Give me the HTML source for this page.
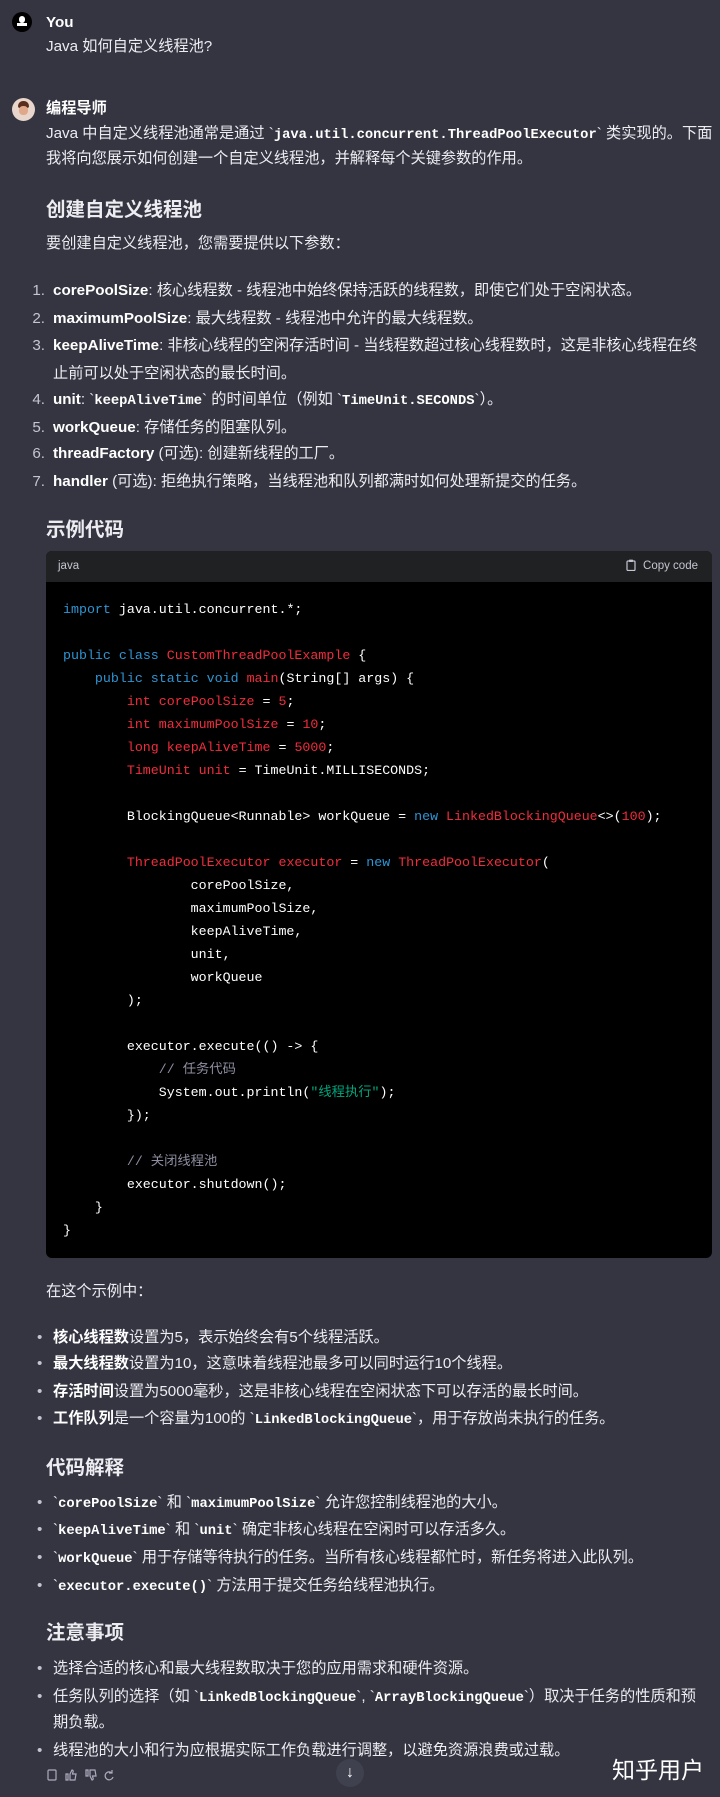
<!DOCTYPE html>
<html><head><meta charset="utf-8"><style>
body{margin:0;width:720px;height:1797px;background:#343541;color:#ececf1;font-family:"Liberation Sans","Noto Sans CJK SC",sans-serif;font-size:15.2px;position:relative;overflow:hidden}
.l{position:absolute;left:46px;line-height:27.5px;white-space:nowrap}
.i{left:53px}
.h{font-size:19.5px;font-weight:bold;line-height:30px}
b{font-weight:bold;color:#fff}
code{font-family:"Liberation Mono","Noto Sans CJK SC",monospace;font-weight:bold;font-size:13.8px;color:#fff}
.n{position:absolute;left:28px;width:17px;text-align:right;color:#c5c5d2;line-height:27.5px}
.d{position:absolute;left:37px;color:#c5c5d2;line-height:27.5px}
.cb{position:absolute;left:46px;top:551px;width:666px;height:707px;background:#000;border-radius:6px;overflow:hidden}
.ch{height:31px;background:#202123;color:#c5c5d2;font-size:11.5px;line-height:31px;padding:0 12px;position:relative}
pre{margin:0;position:absolute;left:17px;top:47px;font-family:"Liberation Mono","Noto Sans CJK SC",monospace;font-size:13.3px;line-height:23px;color:#fff}
.k{color:#2e95d3}.r{color:#f22c3d}.g{color:#00a67d}.c{color:#8e8ea0}
</style></head><body>
<div style="position:absolute;left:12px;top:12px;width:20px;height:20px;border-radius:50%;background:#000"><div style="position:absolute;left:7px;top:4px;width:6px;height:7px;border-radius:3px;background:#fff"></div><div style="position:absolute;left:5px;top:11px;width:10px;height:3px;background:#fff"></div></div>
<div class="l" style="top:9px"><b>You</b></div>
<div class="l" style="top:33px">Java 如何自定义线程池?</div>
<div style="position:absolute;left:12px;top:98px;width:23px;height:23px;border-radius:50%;background:#e8d6cc"><div style="position:absolute;left:6px;top:3px;width:11px;height:7px;border-radius:5px 5px 2px 2px;background:#5a2e1c"></div><div style="position:absolute;left:7px;top:8px;width:9px;height:9px;border-radius:4px;background:#e0a88a"></div></div>
<div class="l" style="top:95px"><b>编程导师</b></div>
<div class="l" style="top:120px">Java 中自定义线程池通常是通过 `<code>java.util.concurrent.ThreadPoolExecutor</code>` 类实现的。下面</div>
<div class="l" style="top:145px">我将向您展示如何创建一个自定义线程池，并解释每个关键参数的作用。</div>
<div class="l h" style="top:195px">创建自定义线程池</div>
<div class="l" style="top:230px">要创建自定义线程池，您需要提供以下参数：</div>

<div class="n" style="top:277px">1.</div><div class="l i" style="top:277px"><b>corePoolSize</b>: 核心线程数 - 线程池中始终保持活跃的线程数，即使它们处于空闲状态。</div>
<div class="n" style="top:305px">2.</div><div class="l i" style="top:305px"><b>maximumPoolSize</b>: 最大线程数 - 线程池中允许的最大线程数。</div>
<div class="n" style="top:332px">3.</div><div class="l i" style="top:332px"><b>keepAliveTime</b>: 非核心线程的空闲存活时间 - 当线程数超过核心线程数时，这是非核心线程在终</div>
<div class="l i" style="top:360px">止前可以处于空闲状态的最长时间。</div>
<div class="n" style="top:386px">4.</div><div class="l i" style="top:386px"><b>unit</b>: `<code>keepAliveTime</code>` 的时间单位（例如 `<code>TimeUnit.SECONDS</code>`）。</div>
<div class="n" style="top:414px">5.</div><div class="l i" style="top:414px"><b>workQueue</b>: 存储任务的阻塞队列。</div>
<div class="n" style="top:440px">6.</div><div class="l i" style="top:440px"><b>threadFactory</b> (可选): 创建新线程的工厂。</div>
<div class="n" style="top:468px">7.</div><div class="l i" style="top:468px"><b>handler</b> (可选): 拒绝执行策略，当线程池和队列都满时如何处理新提交的任务。</div>
<div class="l h" style="top:515px">示例代码</div>

<div class="cb"><div class="ch">java<span style="position:absolute;right:14px;top:0"><svg width="10" height="12" viewBox="0 0 10 12" style="vertical-align:-2px;margin-right:7px"><rect x="1" y="2" width="8" height="9.5" rx="1" fill="none" stroke="#c5c5d2" stroke-width="1.2"/><rect x="3" y="0.6" width="4" height="2.4" rx=".6" fill="#c5c5d2"/></svg>Copy code</span></div>
<pre><span class="k">import</span> java.util.concurrent.*;

<span class="k">public</span> <span class="k">class</span> <span class="r">CustomThreadPoolExample</span> {
    <span class="k">public</span> <span class="k">static</span> <span class="k">void</span> <span class="r">main</span>(String[] args) {
        <span class="r">int</span> <span class="r">corePoolSize</span> = <span class="r">5</span>;
        <span class="r">int</span> <span class="r">maximumPoolSize</span> = <span class="r">10</span>;
        <span class="r">long</span> <span class="r">keepAliveTime</span> = <span class="r">5000</span>;
        <span class="r">TimeUnit</span> <span class="r">unit</span> = TimeUnit.MILLISECONDS;

        BlockingQueue&lt;Runnable&gt; workQueue = <span class="k">new</span> <span class="r">LinkedBlockingQueue</span>&lt;&gt;(<span class="r">100</span>);

        <span class="r">ThreadPoolExecutor</span> <span class="r">executor</span> = <span class="k">new</span> <span class="r">ThreadPoolExecutor</span>(
                corePoolSize,
                maximumPoolSize,
                keepAliveTime,
                unit,
                workQueue
        );

        executor.execute(() -&gt; {
            <span class="c">// 任务代码</span>
            System.out.println(<span class="g">"线程执行"</span>);
        });

        <span class="c">// 关闭线程池</span>
        executor.shutdown();
    }
}</pre></div>

<div class="l" style="top:1278px">在这个示例中：</div>
<div class="d" style="top:1324px">•</div><div class="l i" style="top:1324px"><b>核心线程数</b>设置为5，表示始终会有5个线程活跃。</div>
<div class="d" style="top:1350px">•</div><div class="l i" style="top:1350px"><b>最大线程数</b>设置为10，这意味着线程池最多可以同时运行10个线程。</div>
<div class="d" style="top:1378px">•</div><div class="l i" style="top:1378px"><b>存活时间</b>设置为5000毫秒，这是非核心线程在空闲状态下可以存活的最长时间。</div>
<div class="d" style="top:1405px">•</div><div class="l i" style="top:1405px"><b>工作队列</b>是一个容量为100的 `<code>LinkedBlockingQueue</code>`，用于存放尚未执行的任务。</div>
<div class="l h" style="top:1453px">代码解释</div>
<div class="d" style="top:1489px">•</div><div class="l i" style="top:1489px">`<code>corePoolSize</code>` 和 `<code>maximumPoolSize</code>` 允许您控制线程池的大小。</div>
<div class="d" style="top:1516px">•</div><div class="l i" style="top:1516px">`<code>keepAliveTime</code>` 和 `<code>unit</code>` 确定非核心线程在空闲时可以存活多久。</div>
<div class="d" style="top:1544px">•</div><div class="l i" style="top:1544px">`<code>workQueue</code>` 用于存储等待执行的任务。当所有核心线程都忙时，新任务将进入此队列。</div>
<div class="d" style="top:1572px">•</div><div class="l i" style="top:1572px">`<code>executor.execute()</code>` 方法用于提交任务给线程池执行。</div>
<div class="l h" style="top:1618px">注意事项</div>
<div class="d" style="top:1655px">•</div><div class="l i" style="top:1655px">选择合适的核心和最大线程数取决于您的应用需求和硬件资源。</div>
<div class="d" style="top:1683px">•</div><div class="l i" style="top:1683px">任务队列的选择（如 `<code>LinkedBlockingQueue</code>`, `<code>ArrayBlockingQueue</code>`）取决于任务的性质和预</div>
<div class="l i" style="top:1709px">期负载。</div>
<div class="d" style="top:1737px">•</div><div class="l i" style="top:1737px">线程池的大小和行为应根据实际工作负载进行调整，以避免资源浪费或过载。</div>
<svg style="position:absolute;left:46px;top:1768px" width="80" height="14" viewBox="0 0 80 14" fill="none" stroke="#acacbe" stroke-width="1.2"><rect x="2" y="2" width="8" height="10" rx="1"/><path d="M22 6v6h-2V6zM24 6l2-4c1 0 1.5 1 1 2l-.5 2H30l-1 6h-5z"/><path d="M42 8V2h-2v6zM44 8l2 4c1 0 1.5-1 1-2l-.5-2H50l-1-6h-5z"/><path d="M66 5a4 4 0 1 0 1 4M66 2v3h-3"/></svg>
<div style="position:absolute;left:336px;top:1759px;width:28px;height:28px;border-radius:50%;background:#40414f;color:#fff;text-align:center;line-height:28px;font-size:16px">↓</div>
<div style="position:absolute;left:612px;top:1754px;font-size:23px;color:#fff;line-height:32px">知乎用户</div>
</body></html>
